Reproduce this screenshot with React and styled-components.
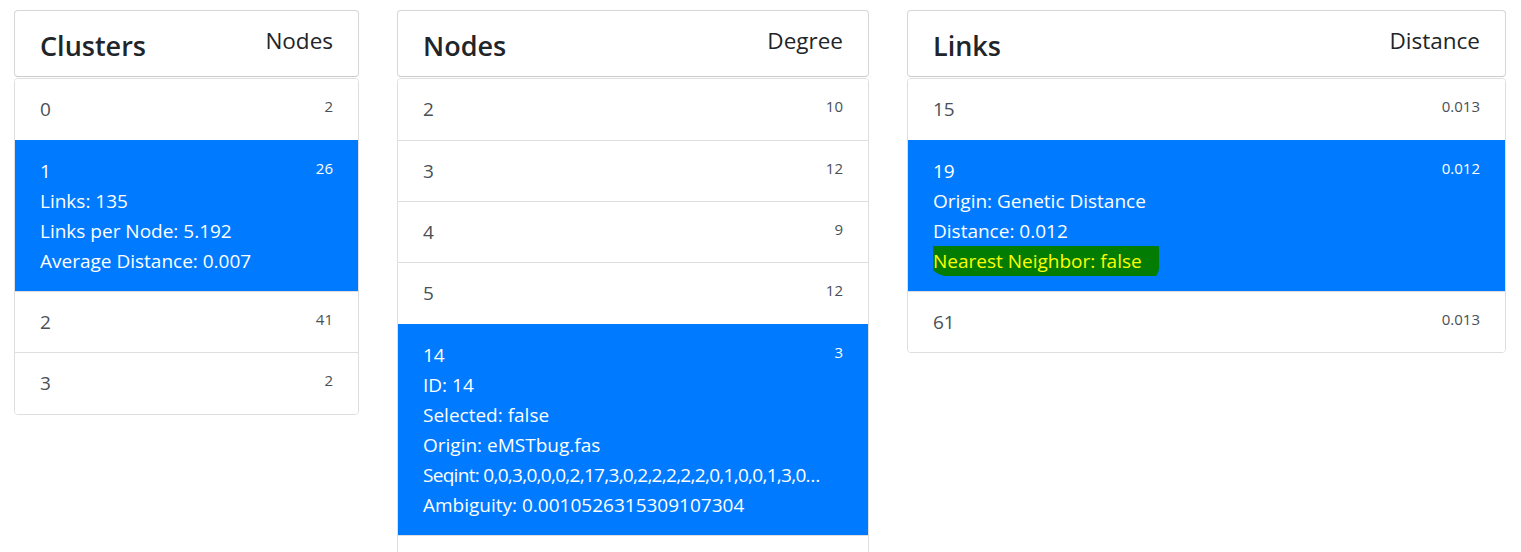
import styled, { createGlobalStyle } from "styled-components";

const GlobalStyle = createGlobalStyle`
  body {
    margin: 0;
    background: #fff;
    font-family: "Open Sans", "Noto Sans", sans-serif;
  }
  * {
    box-sizing: border-box;
  }
`;

const PageStyle = styled.div`
  display: flex;
  align-items: flex-start;
  column-gap: 38px;
  padding: 10px 17px 0 14px;
  height: 552px;
  overflow: hidden;
`;

const ColumnStyle = styled.div`
  width: ${(props) => props.$width}px;
  flex-shrink: 0;
  display: flex;
  flex-direction: column;
  row-gap: 1px;
`;

const HeaderStyle = styled.div`
  display: flex;
  justify-content: space-between;
  align-items: flex-start;
  height: 67px;
  padding: 0 25px;
  border: 1px solid #d6d6d6;
  border-bottom-color: #cbcbcb;
  border-radius: 4px;
  color: #212529;
`;

const TitleStyle = styled.h3`
  margin: 0;
  padding-top: 17px;
  font-size: 27px;
  font-weight: 600;
  line-height: 36px;
`;

const LabelStyle = styled.span`
  padding-top: 15px;
  font-size: 22.5px;
  line-height: 30px;
`;

const ListStyle = styled.div`
  display: flex;
  flex-direction: column;
  border: 1px solid #dedede;
  border-radius: 4px;
  overflow: hidden;
`;

const ItemStyle = styled.div`
  display: flex;
  justify-content: space-between;
  align-items: flex-start;
  column-gap: 12px;
  min-height: 61px;
  padding: 15.1px 25px;
  font-size: 19px;
  line-height: 30px;
  color: ${(props) => (props.$active ? "#fff" : "#495057")};
  background: ${(props) => (props.$active ? "#007bff" : "#fff")};
  &:not(:first-child) {
    border-top: 1px solid ${(props) => (props.$active ? "#007bff" : "#dedede")};
  }
`;

const BodyStyle = styled.div`
  min-width: 0;
  flex: 1;
`;

const LineStyle = styled.div`
  white-space: nowrap;
  overflow: hidden;
  text-overflow: ellipsis;
  letter-spacing: ${(props) => (props.$tight ? "-0.7px" : "normal")};
`;

const BadgeStyle = styled.span`
  flex-shrink: 0;
  margin-top: 4px;
  font-size: 15px;
  line-height: 16px;
`;

const MarkStyle = styled.span`
  display: inline-block;
  margin: -2px 0 -2px -2px;
  padding: 3px 17px 3px 2px;
  line-height: 28px;
  vertical-align: top;
  color: #ffff00;
  background: #027c02;
  border-radius: 2px 16px 8px 30px / 6px 3px 10px 12px;
`;

const columns = [
  {
    title: "Clusters",
    label: "Nodes",
    width: 345,
    items: [
      { id: "0", badge: "2" },
      {
        id: "1",
        badge: "26",
        active: true,
        lines: ["Links: 135", "Links per Node: 5.192", "Average Distance: 0.007"],
      },
      { id: "2", badge: "41" },
      { id: "3", badge: "2" },
    ],
  },
  {
    title: "Nodes",
    label: "Degree",
    width: 472,
    items: [
      { id: "2", badge: "10" },
      { id: "3", badge: "12" },
      { id: "4", badge: "9" },
      { id: "5", badge: "12" },
      {
        id: "14",
        badge: "3",
        active: true,
        lines: [
          "ID: 14",
          "Selected: false",
          "Origin: eMSTbug.fas",
          "Seqint: 0,0,3,0,0,0,2,17,3,0,2,2,2,2,2,0,1,0,0,1,3,0,0,2,1,0,0,0,2,1",
          "Ambiguity: 0.0010526315309107304",
        ],
      },
      // the next row runs past the bottom of the window
      { id: "", badge: "" },
    ],
  },
  {
    title: "Links",
    label: "Distance",
    width: 599,
    items: [
      { id: "15", badge: "0.013" },
      {
        id: "19",
        badge: "0.012",
        active: true,
        lines: ["Origin: Genetic Distance", "Distance: 0.012"],
        mark: "Nearest Neighbor: false",
      },
      { id: "61", badge: "0.013" },
    ],
  },
];

function App() {
  return (
    <>
      <GlobalStyle />
      <PageStyle>
        {columns.map((col) => (
          <ColumnStyle key={col.title} $width={col.width}>
            <HeaderStyle>
              <TitleStyle>{col.title}</TitleStyle>
              <LabelStyle>{col.label}</LabelStyle>
            </HeaderStyle>
            <ListStyle>
              {col.items.map((item, i) => (
                <ItemStyle key={i} $active={item.active}>
                  <BodyStyle>
                    {item.id && <LineStyle>{item.id}</LineStyle>}
                    {item.lines &&
                      item.lines.map((line) => (
                        <LineStyle key={line} $tight={line.startsWith("Seqint")}>
                          {line}
                        </LineStyle>
                      ))}
                    {item.mark && (
                      <LineStyle>
                        <MarkStyle>{item.mark}</MarkStyle>
                      </LineStyle>
                    )}
                  </BodyStyle>
                  {item.badge && <BadgeStyle>{item.badge}</BadgeStyle>}
                </ItemStyle>
              ))}
            </ListStyle>
          </ColumnStyle>
        ))}
      </PageStyle>
    </>
  );
}

export default App;
